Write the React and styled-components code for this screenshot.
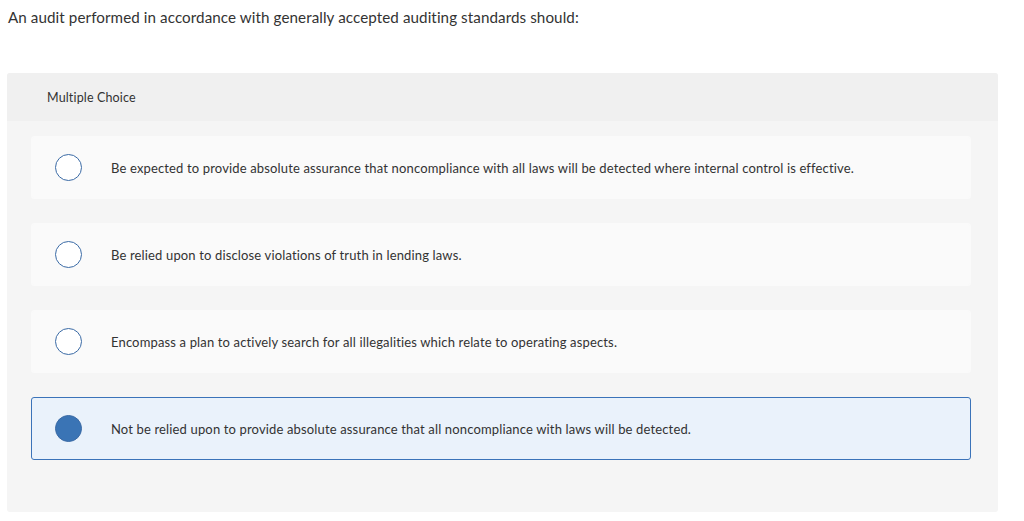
import React from "react";
import styled, { createGlobalStyle } from "styled-components";

const Global = createGlobalStyle`
  html, body { margin: 0; padding: 0; background: #fff; }
  body { font-family: Lato, "Open Sans", "Liberation Sans", Arial, sans-serif; color: #333; }
`;

const Page = styled.div`
  padding: 7px 26px 9px 7px;
  display: flex;
  flex-direction: column;
`;

const Question = styled.p`
  margin: 0 0 0 1px;
  font-size: 15.2px;
  letter-spacing: 0.08px;
  line-height: 20px;
  color: #333;
`;

const Panel = styled.div`
  margin-top: 46px;
  background: #f5f5f5;
  border-radius: 3px;
  overflow: hidden;
`;

const Header = styled.div`
  height: 48px;
  display: flex;
  align-items: center;
  padding-left: 40px;
  background: #f0f0f0;
  font-size: 12.5px;
  letter-spacing: 0.15px;
  color: #333;
`;

const List = styled.div`
  display: flex;
  flex-direction: column;
  gap: 24px;
  padding: 15px 27px 52px 24px;
`;

const Option = styled.label`
  height: 63px;
  box-sizing: border-box;
  display: flex;
  align-items: center;
  padding-left: 23px;
  border-radius: 3px;
  background: ${(p) => (p.$selected ? "#eaf2fb" : "#fafafa")};
  border: 1px solid ${(p) => (p.$selected ? "#3b73b9" : "#fafafa")};
  cursor: pointer;
`;

const Radio = styled.span`
  width: 27px;
  height: 27px;
  box-sizing: border-box;
  border-radius: 50%;
  flex: none;
  border: 1.3px solid #3a6aa5;
  background: ${(p) => (p.$selected ? "#3a74b5" : "#fff")};
`;

const Text = styled.span`
  margin-left: 29px;
  font-size: 13px;
  letter-spacing: 0.15px;
  color: #333;
`;

const options = [
  "Be expected to provide absolute assurance that noncompliance with all laws will be detected where internal control is effective.",
  "Be relied upon to disclose violations of truth in lending laws.",
  "Encompass a plan to actively search for all illegalities which relate to operating aspects.",
  "Not be relied upon to provide absolute assurance that all noncompliance with laws will be detected.",
];

export default function App() {
  const selected = 3;
  return (
    <>
      <Global />
      <Page>
        <Question>An audit performed in accordance with generally accepted auditing standards should:</Question>
        <Panel>
          <Header>Multiple Choice</Header>
          <List>
            {options.map((o, i) => (
              <Option key={i} $selected={i === selected}>
                <Radio $selected={i === selected} />
                <Text>{o}</Text>
              </Option>
            ))}
          </List>
        </Panel>
      </Page>
    </>
  );
}
